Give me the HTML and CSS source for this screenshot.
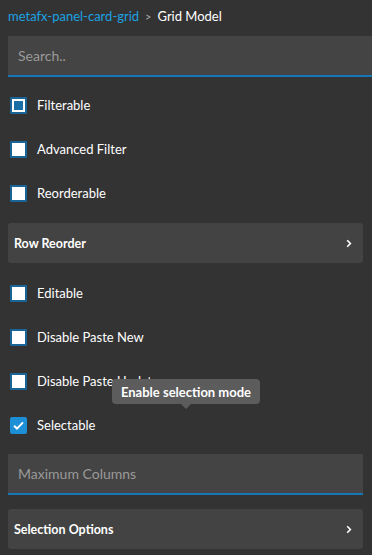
FILE: index.html
```html
<!DOCTYPE html>
<html>
<head>
<meta charset="utf-8">
<link rel="stylesheet" href="styles.css">
</head>
<body>
<div class="panel">
  <div class="crumbs"><span class="crumb-link">metafx-panel-card-grid</span><span class="crumb-sep">&gt;</span><span class="crumb-cur">Grid Model</span></div>
  <div class="search"><span class="placeholder">Search..</span></div>
  <div class="check-row first"><span class="box focused"></span><span class="label">Filterable</span></div>
  <div class="check-row"><span class="box"></span><span class="label">Advanced Filter</span></div>
  <div class="check-row"><span class="box"></span><span class="label">Reorderable</span></div>
  <div class="card"><span class="card-title">Row Reorder</span><svg class="chev" width="6" height="9" viewBox="0 0 6 9"><path d="M1.2 1.2 L4.4 4.5 L1.2 7.8" fill="none" stroke="#fff" stroke-width="1.6"/></svg></div>
  <div class="check-row after-card"><span class="box"></span><span class="label">Editable</span></div>
  <div class="check-row"><span class="box"></span><span class="label">Disable Paste New</span></div>
  <div class="check-row"><span class="box"></span><span class="label">Disable Paste Update</span></div>
  <div class="check-row"><span class="box checked"><svg width="17" height="17" viewBox="0 0 17 17"><path d="M4 8.8 L7 11.6 L13 5.4" fill="none" stroke="#fff" stroke-width="2"/></svg></span><span class="label">Selectable</span></div>
  <div class="input"><span class="placeholder">Maximum Columns</span></div>
  <div class="card last"><span class="card-title">Selection Options</span><svg class="chev" width="6" height="9" viewBox="0 0 6 9"><path d="M1.2 1.2 L4.4 4.5 L1.2 7.8" fill="none" stroke="#fff" stroke-width="1.6"/></svg></div>
  <div class="tooltip">Enable selection mode<span class="arrow"></span></div>
</div>
</body>
</html>
```
FILE: styles.css
```css
html, body {
  margin: 0;
  padding: 0;
  background: #333333;
}
body {
  font-family: "Lato", "Open Sans", sans-serif;
  font-size: 13px;
  color: #ffffff;
  width: 372px;
  height: 555px;
  overflow: hidden;
}
.panel {
  position: relative;
  padding: 0 9px 0 8px;
  display: flex;
  flex-direction: column;
}
.crumbs {
  height: 30px;
  display: flex;
  align-items: center;
  gap: 6px;
  margin-top: 1px;
  margin-bottom: 5px;
}
.crumb-link {
  color: #1ca2e2;
}
.crumb-sep {
  color: #a8a8a8;
  font-size: 11px;
}
.crumb-cur {
  color: #ffffff;
}
.search, .input {
  height: 39px;
  background: #444444;
  border-bottom: 2px solid #1577b6;
  display: flex;
  align-items: center;
  padding-left: 10px;
  font-size: 14px;
}
.search {
  margin-right: -9px;
}
.placeholder {
  color: #9a9a9a;
}
.check-row {
  height: 44px;
  display: flex;
  align-items: center;
  gap: 10px;
  padding-left: 2px;
}
.check-row.first {
  margin-top: 6px;
}
.check-row.after-card {
  margin-top: 8px;
}
.box {
  width: 13px;
  height: 13px;
  border: 2px solid #1a6597;
  background: #ffffff;
  border-radius: 1px;
  flex: none;
  position: relative;
}
.box.focused {
  background: #1a6ea6;
  box-shadow: inset 0 0 0 2px #ffffff;
  border-color: #1a6597;
}
.box.checked {
  width: 17px;
  height: 17px;
  border: none;
  background: #1d8fd6;
  border-radius: 2px;
}
.box.checked svg {
  display: block;
}
.label {
  color: #ffffff;
}
.card {
  height: 40px;
  background: #434343;
  border-radius: 3px;
  display: flex;
  align-items: center;
  justify-content: space-between;
  padding: 0 11px 0 6px;
  margin-top: 8px;
}
.card-title {
  font-weight: 700;
  font-size: 12.5px;
}
.chev {
  display: block;
}
.input {
  margin-top: 7px;
}
.card.last {
  margin-top: 14px;
}
.tooltip {
  position: absolute;
  left: 112px;
  top: 379px;
  width: 148px;
  height: 25px;
  background: #5c5c5c;
  border-radius: 4px;
  color: #ffffff;
  font-weight: 700;
  font-size: 13px;
  display: flex;
  align-items: center;
  justify-content: center;
}
.arrow {
  position: absolute;
  left: 69px;
  bottom: -5px;
  width: 0;
  height: 0;
  border-left: 5px solid transparent;
  border-right: 5px solid transparent;
  border-top: 5px solid #5c5c5c;
}
```
